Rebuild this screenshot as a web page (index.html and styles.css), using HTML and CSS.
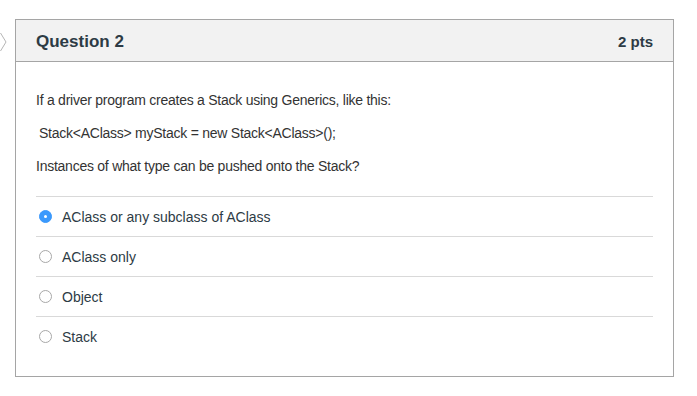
FILE: index.html
```html
<!DOCTYPE html>
<html>
<head>
<meta charset="utf-8">
<link rel="stylesheet" href="styles.css">
</head>
<body>
<div class="page">
  <svg class="chevron" width="8" height="20" viewBox="0 0 8 20"><path d="M0.5 1 L6 10 L0.5 19" fill="none" stroke="#b5b5b5" stroke-width="1"/></svg>
  <div class="question">
    <div class="header">
      <span class="title">Question 2</span>
      <span class="pts">2 pts</span>
    </div>
    <div class="content">
      <p class="text">If a driver program creates a Stack using Generics, like this:</p>
      <p class="text code">Stack&lt;AClass&gt; myStack = new Stack&lt;AClass&gt;();</p>
      <p class="text">Instances of what type can be pushed onto the Stack?</p>
      <div class="answers">
        <div class="answer"><span class="radio checked"></span><span class="label">AClass or any subclass of AClass</span></div>
        <div class="answer"><span class="radio"></span><span class="label">AClass only</span></div>
        <div class="answer"><span class="radio"></span><span class="label">Object</span></div>
        <div class="answer"><span class="radio"></span><span class="label">Stack</span></div>
      </div>
    </div>
  </div>
</div>
</body>
</html>
```

FILE: styles.css
```css
html, body {
  margin: 0;
  padding: 0;
  background: #ffffff;
}
body {
  font-family: "Liberation Sans", Arial, Helvetica, sans-serif;
  color: #2d3b45;
}
.page {
  position: relative;
  padding: 19px 0 0 15px;
}
.chevron {
  position: absolute;
  left: 0;
  top: 32px;
}
.question {
  width: 657px;
  height: 356px;
  border: 1px solid #a5a5a5;
}
.header {
  background: #f2f2f2;
  border-bottom: 1px solid #a5a5a5;
  display: flex;
  align-items: center;
  justify-content: space-between;
  padding: 2px 20px 0 20px;
  box-sizing: border-box;
  height: 42px;
}
.title {
  font-weight: bold;
  font-size: 17px;
  color: #2d3b45;
}
.pts {
  font-weight: bold;
  font-size: 15px;
  color: #2d3b45;
}
.content {
  padding: 30px 20px 0 20px;
}
.text {
  margin: 0 0 17px 0;
  font-size: 14px;
  line-height: 16px;
  color: #333333;
  letter-spacing: -0.25px;
}
.code {
  padding-left: 3px;
}
.answers {
  margin-top: 22px;
  border-top: 1px solid #d9d9d9;
}
.answer {
  height: 39px;
  display: flex;
  align-items: center;
  padding-left: 3px;
  border-bottom: 1px solid #d9d9d9;
}
.answer:last-child {
  border-bottom: none;
}
.radio {
  width: 11px;
  height: 11px;
  border-radius: 50%;
  border: 1px solid #a8a8a8;
  background: #fff;
  margin-right: 10px;
  position: relative;
  flex: none;
}
.radio.checked {
  background: #3b99fc;
  border-color: #3b99fc;
}
.radio.checked::after {
  content: "";
  position: absolute;
  left: 4px;
  top: 4px;
  width: 3px;
  height: 3px;
  border-radius: 50%;
  background: #fff;
}
.label {
  font-size: 14px;
  color: #2d3b45;
}
```
